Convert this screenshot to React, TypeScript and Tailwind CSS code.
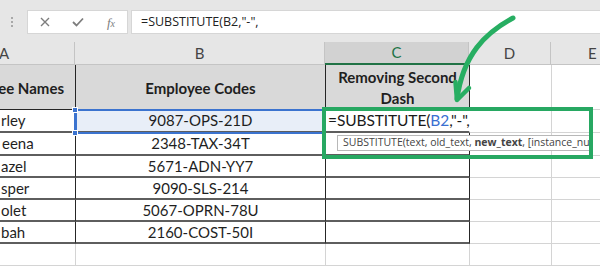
import React from "react";

const cellFont = { fontFamily: "Lato, 'Open Sans', sans-serif" };

const names = [
  { t: "rley", pl: "pl-[1px]" },
  { t: "eena", pl: "pl-[2px]" },
  { t: "azel", pl: "pl-[1px]" },
  { t: "sper", pl: "pl-[1px]" },
  { t: "olet", pl: "pl-[1px]" },
  { t: "bah", pl: "pl-[1px]" },
];
const codes = [
  "9087-OPS-21D",
  "2348-TAX-34T",
  "5671-ADN-YY7",
  "9090-SLS-214",
  "5067-OPRN-78U",
  "2160-COST-50I",
];
const rowH = ["h-[23px]", "h-[23px]", "h-[22px]", "h-[22px]", "h-[22px]", "h-[22px]"];

export default function App() {
  return (
    <div
      className="relative w-[600px] h-[267px] overflow-hidden bg-white text-[#1f1f1f]"
      style={cellFont}
    >
      {/* Formula bar area */}
      <div className="h-[42px] bg-[#e6e6e6] flex flex-col">
        <div className="h-[10px]" />
        <div className="h-[24px] flex items-stretch">
          <div className="w-[27px] flex flex-col items-center justify-center gap-[2px] pr-[3px]">
            <span className="w-[2px] h-[2px] bg-[#a8a8a8]" />
            <span className="w-[2px] h-[2px] bg-[#a8a8a8]" />
            <span className="w-[2px] h-[2px] bg-[#a8a8a8]" />
          </div>
          <div className="w-[101px] bg-white border border-[#d6d6d6] flex items-center">
            <div className="w-[33px] flex justify-center">
              <svg width="10" height="10" viewBox="0 0 10 10">
                <path d="M1 1 L9 9 M9 1 L1 9" stroke="#7d7d7d" strokeWidth="1.4" fill="none" />
              </svg>
            </div>
            <div className="w-[34px] flex justify-center">
              <svg width="12" height="10" viewBox="0 0 12 10">
                <path d="M1 5 L4.5 8.5 L11 1.5" stroke="#7d7d7d" strokeWidth="1.8" fill="none" />
              </svg>
            </div>
            <div className="w-[32px] flex justify-center">
              <span
                className="italic text-[13px] text-[#7d7d7d] leading-none"
                style={{ fontFamily: "'Liberation Serif', serif" }}
              >
                f<span className="text-[10px]">x</span>
              </span>
            </div>
          </div>
          <div className="w-[3px]" />
          <div
            className="flex-1 bg-white border border-[#d6d6d6] border-r-0 flex items-center pl-[9px] text-[12.5px] text-[#222]"
            style={{ fontFamily: "'Open Sans', sans-serif" }}
          >
            =SUBSTITUTE(B2,"-",
          </div>
        </div>
        <div className="flex-1" />
      </div>

      {/* Column headers */}
      <div className="flex h-[23px] text-[15px] text-[#444]">
        <div className="w-[76px] bg-[#e6e6e6] border-r border-b border-[#c4c4c4] flex items-center -ml-[1px]">
          A
        </div>
        <div className="w-[250px] bg-[#e6e6e6] border-r border-b border-[#c4c4c4] flex items-center justify-center">
          B
        </div>
        <div className="w-[144px] bg-[#d2d2d2] border-r border-[#c4c4c4] border-b-2 border-b-[#217346] flex items-center justify-center text-[#217346]">
          C
        </div>
        <div className="w-[82px] bg-[#e6e6e6] border-r border-b border-[#c4c4c4] flex items-center justify-center">
          D
        </div>
        <div className="flex-1 bg-[#e6e6e6] border-b border-[#c4c4c4] flex items-center pl-[37px]">
          E
        </div>
      </div>

      {/* Row 1 headers */}
      <div className="flex h-[45px] text-[15px] font-bold">
        <div className="w-[76px] bg-[#d9d9d9] border-r border-b border-[#262626] flex items-center justify-end pr-[11px] pt-[2px] whitespace-nowrap overflow-hidden">
          ee Names
        </div>
        <div className="w-[250px] bg-[#d9d9d9] border-r border-b border-[#262626] flex items-center justify-center pt-[2px]">
          Employee Codes
        </div>
        <div className="w-[144px] bg-[#d9d9d9] border-r border-b border-[#262626] flex items-center justify-center text-center leading-[21px] pt-[2px]">
          Removing Second
          <br />
          Dash
        </div>
        <div className="w-[82px] border-r border-b border-[#d4d4d4]" />
        <div className="flex-1 border-b border-[#d4d4d4]" />
      </div>

      {/* Data rows */}
      {codes.map((c, i) => (
        <div key={c} className={`flex ${rowH[i]} text-[15px]`}>
          <div
            className={`w-[76px] border-r border-b-2 border-r-[#262626] border-b-[#5e5e5e] flex items-center whitespace-nowrap ${names[i].pl}`}
          >
            {names[i].t}
          </div>
          <div
            className={`w-[250px] border-r border-b-2 border-r-[#262626] border-b-[#5e5e5e] flex items-center justify-center ${
              i === 0 ? "bg-[#e8eef8]" : ""
            }`}
          >
            {c}
          </div>
          <div
            className={`w-[144px] border-b-2 border-b-[#5e5e5e] border-r ${
              i === 0 ? "border-r-white" : "border-r-[#262626]"
            }`}
          />
          <div className="w-[82px] border-r border-b border-[#d4d4d4]" />
          <div className="flex-1 border-b border-[#d4d4d4]" />
        </div>
      ))}
      <div className="flex h-[22px]">
        <div className="w-[76px] border-r border-b border-[#d4d4d4]" />
        <div className="w-[250px] border-r border-b border-[#d4d4d4]" />
        <div className="w-[144px] border-r border-b border-[#d4d4d4]" />
        <div className="w-[82px] border-r border-b border-[#d4d4d4]" />
        <div className="flex-1 border-b border-[#d4d4d4]" />
      </div>

      {/* B2 selection */}
      <div className="absolute left-[74px] top-[109px] w-[252px] h-[25px] border-l-[3px] border-t-2 border-b-2 border-[#3b73cf]" />
      <div className="absolute left-[72px] top-[107px] w-[6px] h-[6px] bg-[#3b73cf] border border-white" />
      <div className="absolute left-[72px] top-[130px] w-[6px] h-[6px] bg-[#3b73cf] border border-white" />

      {/* C2 editing text */}
      <div className="absolute left-[328px] top-[110px] h-[22px] flex items-center text-[15.5px] tracking-[-0.1px] whitespace-nowrap text-[#1a1a1a]">
        =SUBSTITUTE(<span className="text-[#3a6fd1]">B2</span>,"-",
      </div>

      {/* Tooltip */}
      <div
        className="absolute left-[337px] top-[135px] w-[254px] h-[16px] bg-white border border-[#b8b8b8] overflow-hidden whitespace-nowrap flex items-center pl-[5px] text-[10.5px] text-[#444]"
        style={{ fontFamily: "'Open Sans', sans-serif" }}
      >
        SUBSTITUTE(text, old_text,&nbsp;<b className="font-bold">new_text</b>, [instance_num])
      </div>

      {/* Green highlight box */}
      <div className="absolute left-[322px] top-[107px] w-[271px] h-[52px] border-4 border-[#27a862]" />

      {/* Arrow */}
      <svg className="absolute left-0 top-0" width="600" height="267" viewBox="0 0 600 267">
        <path
          d="M513 18 C 485 33, 463 55, 457 99"
          stroke="#27ae62"
          strokeWidth="5"
          fill="none"
          strokeLinecap="round"
        />
        <path
          d="M455.5 82 L457 100 L469 88"
          stroke="#27ae62"
          strokeWidth="4.5"
          fill="none"
          strokeLinecap="round"
          strokeLinejoin="round"
        />
      </svg>
    </div>
  );
}
